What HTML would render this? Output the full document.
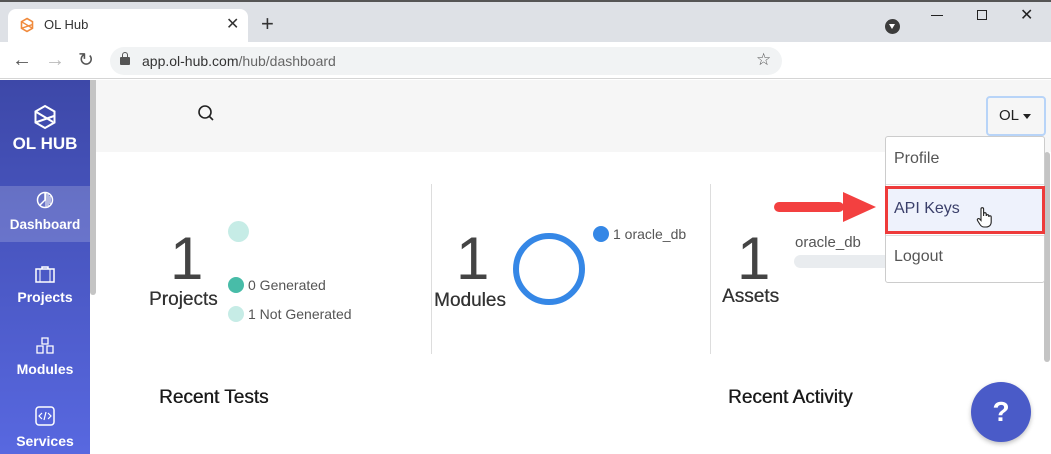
<!DOCTYPE html>
<html><head><meta charset="utf-8"><style>
*{margin:0;padding:0;box-sizing:border-box}
body{width:1051px;height:454px;overflow:hidden;position:relative;font-family:"Liberation Sans",Arial,sans-serif;background:#fff}
.a{position:absolute}
.num{position:absolute;font-size:60px;color:#444;line-height:1}
.lbl{position:absolute;font-size:19px;color:#333;text-shadow:0.3px 0 0 #333}
.leg{position:absolute;font-size:14px;color:#555;white-space:nowrap}
.dot{display:inline-block;width:16px;height:16px;border-radius:50%;vertical-align:-3px;margin-right:4px}
.nav{position:absolute;left:0;width:90px;text-align:center;color:#fff;font-weight:bold;font-size:14px}
.h{position:absolute;font-size:19px;color:#1a1a1a;text-shadow:0.4px 0 0 #1a1a1a}
</style></head><body>
<!-- chrome -->
<div class="a" style="left:0;top:0;width:1051px;height:42px;background:#dee1e6;border-top:2px solid #555"></div>
<div class="a" style="left:8px;top:9px;width:240px;height:34px;background:#fff;border-radius:8px 8px 0 0"></div>
<svg class="a" style="left:19px;top:17px" width="16" height="16" viewBox="0 0 16 16"><path d="M8 1.5L13.5 4.7V11.3L8 14.5L2.5 11.3V4.7Z" fill="none" stroke="#f08a3c" stroke-width="1.6"/><path d="M2.5 4.7L13 11M2.5 11.3L13.5 7.5" stroke="#f08a3c" stroke-width="1.4" fill="none"/></svg>
<div class="a" style="left:44px;top:17px;font-size:13px;color:#333">OL Hub</div>
<div class="a" style="left:226px;top:14px;font-size:16px;color:#333">✕</div>
<div class="a" style="left:261px;top:11px;font-size:22px;color:#333">+</div>
<div class="a" style="left:885px;top:19px;width:15px;height:15px;border-radius:50%;background:#3c3c3c"></div>
<div class="a" style="left:889px;top:24px;width:0;height:0;border-left:3.5px solid transparent;border-right:3.5px solid transparent;border-top:5px solid #fff"></div>
<div class="a" style="left:931px;top:15px;width:12px;height:1px;background:#222"></div>
<div class="a" style="left:977px;top:10px;width:10px;height:10px;border:1px solid #222"></div>
<div class="a" style="left:1020px;top:5px;font-size:16px;color:#222">✕</div>
<div class="a" style="left:0;top:42px;width:1051px;height:37px;background:#fff;border-bottom:1px solid #d5d5d5"></div>
<div class="a" style="left:12px;top:49px;font-size:20px;color:#555">←</div>
<div class="a" style="left:45px;top:49px;font-size:20px;color:#bbb">→</div>
<div class="a" style="left:78px;top:49px;font-size:19px;color:#555">↻</div>
<div class="a" style="left:110px;top:47px;width:672px;height:28px;background:#f1f3f4;border-radius:14px"></div>
<div class="a" style="left:120px;top:57px;width:10px;height:8px;background:#555;border-radius:1px"></div>
<div class="a" style="left:122px;top:52px;width:6px;height:7px;border:1.5px solid #555;border-bottom:none;border-radius:3px 3px 0 0"></div>
<div class="a" style="left:142px;top:53px;font-size:14px;color:#333">app.ol-hub.com<span style="color:#666">/hub/dashboard</span></div>
<div class="a" style="left:756px;top:50px;font-size:17px;color:#555">☆</div>
<!-- sidebar -->
<div class="a" style="left:0;top:80px;width:90px;height:374px;background:linear-gradient(#3d48a8,#5868e0)"></div>
<div class="a" style="left:90px;top:80px;width:6px;height:374px;background:#fff"></div>
<div class="a" style="left:90px;top:80px;width:6px;height:215px;background:#c4c4c4;border-radius:0 0 3px 3px"></div>
<svg class="a" style="left:33px;top:104px" width="24" height="26" viewBox="0 0 24 26"><path d="M12 2L21.5 7.5V18.5L12 24L2.5 18.5V7.5Z" fill="none" stroke="#fff" stroke-width="2"/><path d="M2.5 7.5L20 18M2.5 18.5L21 12" stroke="#fff" stroke-width="2" fill="none"/></svg>
<div class="nav" style="top:134px;font-size:17px">OL HUB</div>
<div class="a" style="left:0;top:186px;width:90px;height:56px;background:rgba(255,255,255,.18)"></div>
<svg class="a" style="left:36px;top:191px" width="18" height="18"><circle cx="9" cy="9" r="7.5" fill="none" stroke="#fff" stroke-width="1.5"/><path d="M9 1.5V9L4 14" stroke="#fff" stroke-width="1.5" fill="none"/><path d="M10 2v14M12 3v12M14 5v8" stroke="#fff" stroke-width="1"/></svg>
<div class="nav" style="top:217px;font-size:13.5px">Dashboard</div>
<svg class="a" style="left:35px;top:266px" width="20" height="17"><rect x="1" y="3" width="18" height="13" fill="none" stroke="#fff" stroke-width="1.5"/><path d="M7 3V1H13V3" fill="none" stroke="#fff" stroke-width="1.5"/><path d="M5 3v13M15 3v13" stroke="#fff"/></svg>
<div class="nav" style="top:289px">Projects</div>
<svg class="a" style="left:35px;top:336px" width="20" height="20" fill="none" stroke="#fff" stroke-width="1.3"><path d="M7 2h6v6H7zM2 10h6v7H2zM12 10h6v7h-6z"/></svg>
<div class="nav" style="top:361px">Modules</div>
<svg class="a" style="left:35px;top:406px" width="20" height="20" fill="none" stroke="#fff" stroke-width="1.5"><rect x="1" y="1" width="18" height="18" rx="3"/><path d="M7 7l-3 3 3 3M13 7l3 3-3 3M11 6l-2 8" stroke-width="1.2"/></svg>
<div class="nav" style="top:433px">Services</div>
<!-- header -->
<div class="a" style="left:96px;top:80px;width:955px;height:72px;background:#f6f6f6"></div>
<svg class="a" style="left:197px;top:104px" width="18" height="18" fill="none" stroke="#222" stroke-width="1.6"><circle cx="8" cy="8" r="6"/><path d="M12.5 12.5L16 16"/></svg>
<div class="a" style="left:986px;top:96px;width:60px;height:40px;border:2px solid #b8d4f8;border-radius:4px;background:#f6f6f6"></div>
<div class="a" style="left:999px;top:107px;font-size:15px;color:#222">OL</div>
<div class="a" style="left:1023px;top:114px;border-left:4px solid transparent;border-right:4px solid transparent;border-top:5px solid #222"></div>
<div class="a" style="left:1043px;top:152px;width:8px;height:302px;background:#fff"></div>
<div class="a" style="left:1044px;top:152px;width:6px;height:210px;background:#c4c4c4;border-radius:3px"></div>
<!-- stats -->
<div class="a" style="left:431px;top:184px;width:1px;height:170px;background:#ddd"></div>
<div class="a" style="left:710px;top:184px;width:1px;height:170px;background:#ddd"></div>
<div class="num" style="left:170px;top:229px">1</div>
<div class="lbl" style="left:149px;top:289px">Projects</div>
<div class="a" style="left:228px;top:221px;width:21px;height:21px;border-radius:50%;background:#c6ece6"></div>
<div class="leg" style="left:228px;top:277px"><span class="dot" style="background:#48bca8"></span>0 Generated</div>
<div class="leg" style="left:228px;top:306px"><span class="dot" style="background:#c6ece6"></span>1 Not Generated</div>
<div class="num" style="left:456px;top:229px">1</div>
<div class="lbl" style="left:434px;top:290px">Modules</div>
<div class="a" style="left:513px;top:233px;width:72px;height:72px;border-radius:50%;border:6.5px solid #3587e6"></div>
<div class="leg" style="left:593px;top:226px"><span class="dot" style="background:#3587e6"></span>1 oracle_db</div>
<div class="num" style="left:737px;top:229px">1</div>
<div class="lbl" style="left:722px;top:286px">Assets</div>
<div class="leg" style="left:795px;top:234px;font-size:15px">oracle_db</div>
<div class="a" style="left:794px;top:255px;width:100px;height:13px;border-radius:7px;background:#e9ecef"></div>
<div class="h" style="left:159px;top:387px">Recent Tests</div>
<div class="h" style="left:728px;top:387px">Recent Activity</div>
<div class="a" style="left:971px;top:382px;width:60px;height:60px;border-radius:50%;background:#4a5bc8;box-shadow:0 2px 5px rgba(0,0,0,.25);color:#fff;font-weight:bold;font-size:28px;text-align:center;line-height:60px">?</div>
<!-- arrow -->
<div class="a" style="left:774px;top:202px;width:70px;height:10px;background:#f34040;border-radius:5px"></div>
<div class="a" style="left:843px;top:192px;border-top:15px solid transparent;border-bottom:15px solid transparent;border-left:33px solid #f34040"></div>
<!-- dropdown -->
<div class="a" style="left:885px;top:136px;width:160px;height:147px;background:#fff;border:1px solid #ccc;border-radius:3px"></div>
<div class="a" style="left:894px;top:150px;font-size:16px;color:#555">Profile</div>
<div class="a" style="left:886px;top:184px;width:158px;height:1px;background:#ddd"></div>
<div class="a" style="left:885px;top:186px;width:160px;height:48px;background:#eef2fc;border:3px solid #ee3a3a"></div>
<div class="a" style="left:894px;top:200px;font-size:16px;color:#3a3f6a">API Keys</div>
<svg class="a" style="left:976px;top:206px" width="16" height="22" viewBox="0 0 16 22"><path d="M5 12V3a1.3 1.3 0 0 1 2.6 0v7V8a1.3 1.3 0 0 1 2.6 0v2a1.3 1.3 0 0 1 2.6 0v1a1.2 1.2 0 0 1 2.4 0v5c0 3-2 5-5 5H8c-2 0-3-1-4-2.5L1.5 14.5a1.3 1.3 0 0 1 2-1.6L5 14.5Z" fill="#fff" stroke="#222" stroke-width="1.1"/></svg>
<div class="a" style="left:886px;top:235px;width:158px;height:1px;background:#ddd"></div>
<div class="a" style="left:894px;top:248px;font-size:16px;color:#555">Logout</div>
</body></html>
